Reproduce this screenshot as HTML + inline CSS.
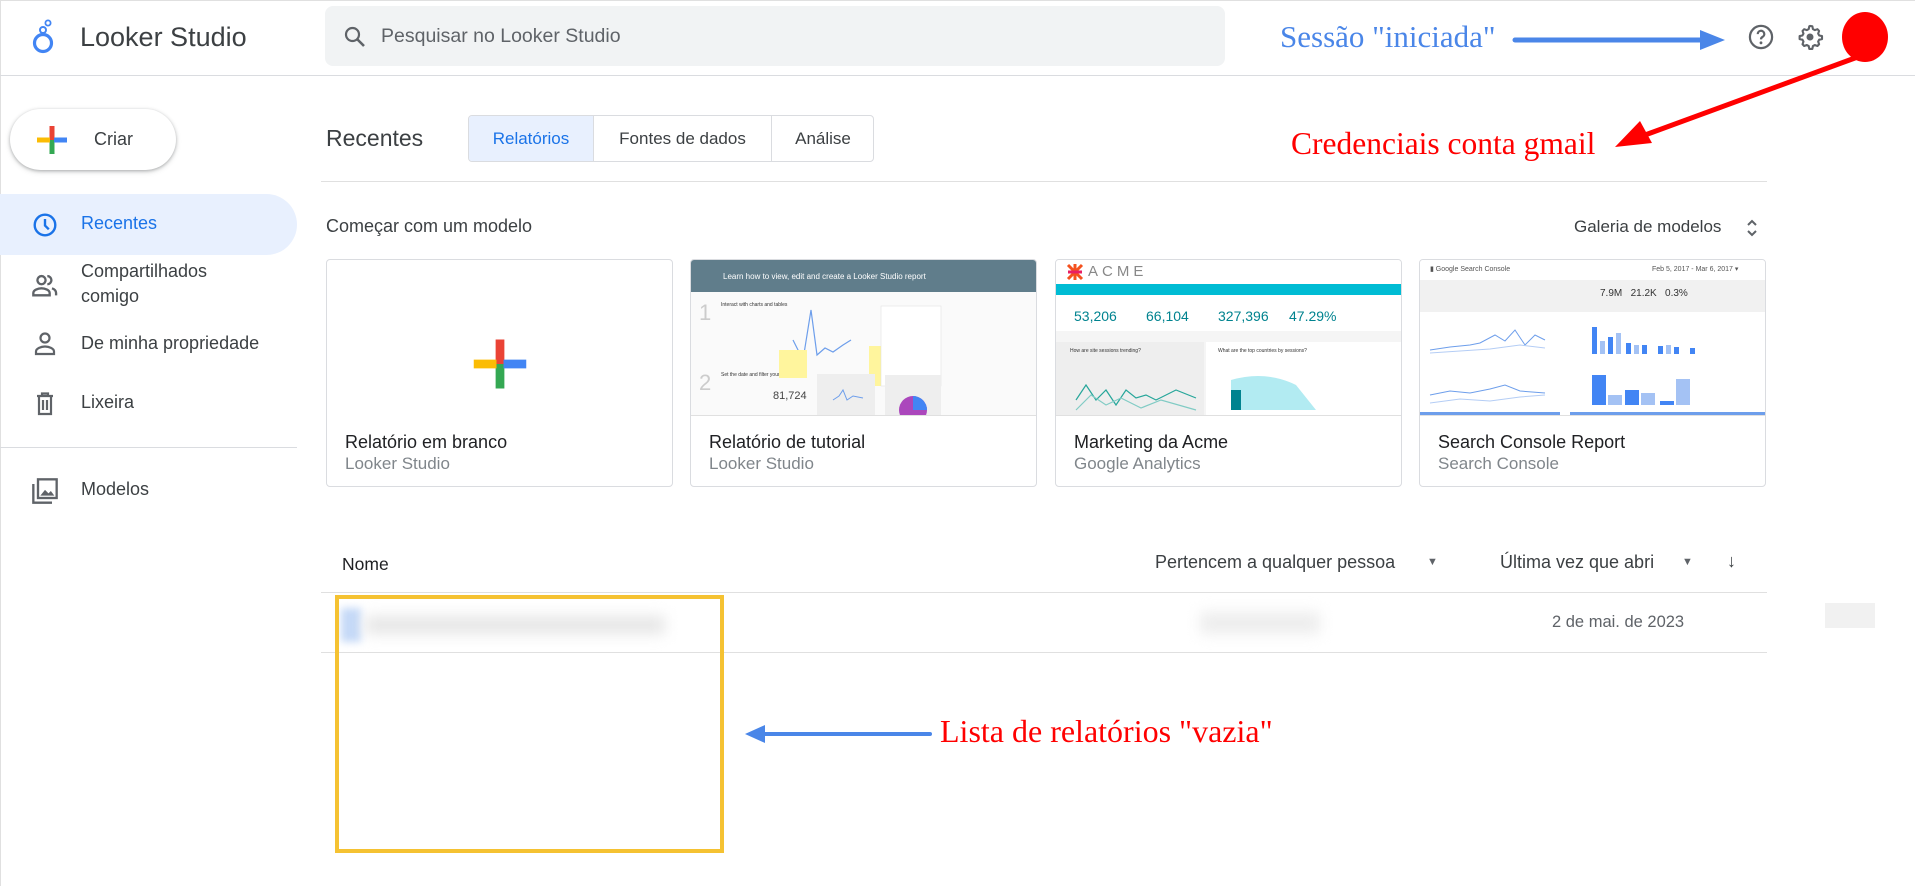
<!DOCTYPE html>
<html><head><meta charset="utf-8"><style>
*{margin:0;padding:0;box-sizing:border-box}
body{width:1915px;height:886px;overflow:hidden;background:#fff;font-family:"Liberation Sans",Arial,sans-serif;color:#3c4043;position:relative}
.a{position:absolute;white-space:nowrap}
.serif{font-family:"Liberation Serif",serif}
.card{position:absolute;top:259px;width:347px;height:228px;border:1px solid #dadce0;border-radius:4px;overflow:hidden;background:#fff}
.thumb{position:absolute;left:0;top:0;width:100%;height:156px;border-bottom:1px solid #e0e0e0;overflow:hidden}
.ct{position:absolute;left:18px;top:172px;font-size:18px;color:#202124}
.cs{position:absolute;left:18px;top:194px;font-size:17px;color:#80868b}
.nav{position:absolute;left:81px;font-size:18px;color:#3c4043}
</style></head><body>
<div class="a" style="left:0;top:0;width:1915px;height:1px;background:#e0e0e0"></div>
<div class="a" style="left:0;top:0;width:1px;height:886px;background:#e0e0e0"></div>
<!-- header -->
<div class="a" style="left:0;top:75px;width:1915px;height:1px;background:#dadce0"></div>
<svg class="a" style="left:30px;top:17px" width="28" height="40" viewBox="0 0 28 40"><circle cx="13" cy="26" r="8.5" fill="none" stroke="#4285f4" stroke-width="3.2"/><circle cx="13" cy="13" r="3" fill="none" stroke="#4285f4" stroke-width="2"/><circle cx="18" cy="6" r="2.6" fill="none" stroke="#4285f4" stroke-width="1.8"/></svg>
<div class="a" style="left:80px;top:22px;font-size:27px;color:#3c4043">Looker Studio</div>
<div class="a" style="left:325px;top:6px;width:900px;height:60px;background:#f1f3f4;border-radius:8px"></div>
<svg class="a" style="left:343px;top:25px" width="24" height="24" viewBox="0 0 24 24"><circle cx="9.5" cy="9.5" r="6.5" fill="none" stroke="#5f6368" stroke-width="2.2"/><path d="M14.5 14.5L21 21" stroke="#5f6368" stroke-width="2.6"/></svg>
<div class="a" style="left:381px;top:25px;font-size:19.5px;color:#5f6368">Pesquisar no Looker Studio</div>
<div class="a serif" style="left:1280px;top:19px;font-size:31px;color:#4a86e8">Sessão "iniciada"</div>
<svg class="a" style="left:1500px;top:25px" width="230" height="30"><path d="M15 15H205" stroke="#4a86e8" stroke-width="5" stroke-linecap="round"/><path d="M200 5L225 15L200 25Z" fill="#4a86e8"/></svg>
<svg class="a" style="left:1747px;top:23px" width="28" height="28" viewBox="0 0 24 24"><circle cx="12" cy="12" r="9.5" fill="none" stroke="#5f6368" stroke-width="1.9"/><path d="M9.2 9.5a2.8 2.8 0 1 1 4 2.5c-.9.5-1.2 1-1.2 2" fill="none" stroke="#5f6368" stroke-width="1.9"/><circle cx="12" cy="17" r="1.2" fill="#5f6368"/></svg>
<svg class="a" style="left:1796px;top:23px" width="28" height="28" viewBox="0 0 24 24"><path d="M12 2.5l2 .3.5 2.4 1.6.9 2.3-.8 1.4 1.5-.8 2.3.9 1.6 2.4.5v2.6l-2.4.5-.9 1.6.8 2.3-1.4 1.5-2.3-.8-1.6.9-.5 2.4h-2.6l-.5-2.4-1.6-.9-2.3.8-1.4-1.5.8-2.3-.9-1.6-2.4-.5v-2.6l2.4-.5.9-1.6-.8-2.3 1.4-1.5 2.3.8 1.6-.9.5-2.4z" fill="none" stroke="#5f6368" stroke-width="1.8" stroke-linejoin="round"/><circle cx="12" cy="12" r="3" fill="#5f6368"/></svg>
<div class="a" style="left:1842px;top:12px;width:46px;height:50px;border-radius:50%;background:#ff0000"></div>
<svg class="a" style="left:1600px;top:55px" width="260" height="100"><path d="M255 3L45 80" stroke="#ff0000" stroke-width="5" stroke-linecap="round"/><path d="M15 92L40 66L52 88Z" fill="#ff0000"/></svg>
<div class="a serif" style="left:1291px;top:126px;font-size:31.5px;color:#ff0000">Credenciais conta gmail</div>
<!-- sidebar -->
<div class="a" style="left:10px;top:109px;width:166px;height:61px;border-radius:31px;background:#fff;box-shadow:0 1px 3px rgba(60,64,67,.35),0 2px 6px rgba(60,64,67,.15)"></div>
<svg class="a" style="left:37px;top:124px" width="30" height="32" viewBox="0 0 30 32"><rect x="12.5" y="2" width="5" height="14" fill="#ea4335"/><rect x="12.5" y="16" width="5" height="14" fill="#34a853"/><rect x="0" y="13.5" width="13" height="5" fill="#fbbc04"/><rect x="17" y="13.5" width="13" height="5" fill="#4285f4"/></svg>
<div class="a" style="left:94px;top:129px;font-size:18px;color:#3c4043">Criar</div>
<div class="a" style="left:0;top:194px;width:297px;height:61px;background:#e8f0fe;border-radius:0 31px 31px 0"></div>
<svg class="a" style="left:32px;top:212px" width="26" height="26" viewBox="0 0 24 24"><circle cx="12" cy="12" r="9.5" fill="none" stroke="#1a73e8" stroke-width="2.2"/><path d="M12 6.5V12.5L15.5 16" fill="none" stroke="#1a73e8" stroke-width="2.2"/></svg>
<div class="nav" style="top:213px;color:#1a73e8">Recentes</div>
<svg class="a" style="left:31px;top:273px" width="28" height="26" viewBox="0 0 24 22"><circle cx="9" cy="6" r="3.5" fill="none" stroke="#5f6368" stroke-width="2"/><path d="M2 19v-2c0-2.5 4-4 7-4s7 1.5 7 4v2z" fill="none" stroke="#5f6368" stroke-width="2"/><path d="M14 2.5a3.5 3.5 0 0 1 0 7M18 13c2 .7 3.5 2 3.5 4v2" fill="none" stroke="#5f6368" stroke-width="2"/></svg>
<div class="nav" style="top:261px">Compartilhados</div>
<div class="nav" style="top:286px">comigo</div>
<svg class="a" style="left:33px;top:331px" width="24" height="26" viewBox="0 0 24 26"><circle cx="12" cy="7" r="4.5" fill="none" stroke="#5f6368" stroke-width="2.2"/><path d="M3 23v-2.5c0-3 5-5 9-5s9 2 9 5V23z" fill="none" stroke="#5f6368" stroke-width="2.2"/></svg>
<div class="nav" style="top:333px">De minha propriedade</div>
<svg class="a" style="left:33px;top:391px" width="24" height="26" viewBox="0 0 24 26"><path d="M4 5h16M9 5V2.5h6V5M6 5v18h12V5M10 9v10M14 9v10" fill="none" stroke="#5f6368" stroke-width="2.2"/></svg>
<div class="nav" style="top:392px">Lixeira</div>
<div class="a" style="left:0;top:447px;width:297px;height:1px;background:#dadce0"></div>
<svg class="a" style="left:31px;top:477px" width="28" height="28" viewBox="0 0 24 24"><rect x="6" y="2" width="16" height="16" fill="none" stroke="#5f6368" stroke-width="2"/><path d="M2 6v16h16" fill="none" stroke="#5f6368" stroke-width="2"/><path d="M8 16l4-5 3 3 2-2 3 4z" fill="#5f6368"/></svg>
<div class="nav" style="top:479px">Modelos</div>
<!-- main -->
<div class="a" style="left:326px;top:125px;font-size:23px;color:#3c4043">Recentes</div>
<div class="a" style="left:468px;top:115px;width:406px;height:47px;border:1px solid #dadce0;border-radius:4px;overflow:hidden">
 <div class="a" style="left:0;top:0;width:125px;height:45px;background:#e8f0fe;border-right:1px solid #dadce0;color:#1a73e8;font-size:17px;text-align:center;line-height:45px">Relatórios</div>
 <div class="a" style="left:125px;top:0;width:178px;height:45px;border-right:1px solid #dadce0;font-size:17px;text-align:center;line-height:45px">Fontes de dados</div>
 <div class="a" style="left:303px;top:0;width:102px;height:45px;font-size:17px;text-align:center;line-height:45px">Análise</div>
</div>
<div class="a" style="left:321px;top:181px;width:1446px;height:1px;background:#e0e0e0"></div>
<div class="a" style="left:326px;top:216px;font-size:18px;color:#3c4043">Começar com um modelo</div>
<div class="a" style="left:1574px;top:217px;font-size:17px;color:#3c4043">Galeria de modelos</div>
<svg class="a" style="left:1746px;top:217px" width="12" height="22" viewBox="0 0 12 22"><path d="M2 8l4-4 4 4M2 14l4 4 4-4" fill="none" stroke="#5f6368" stroke-width="2"/></svg>
<!-- cards -->
<div class="card" style="left:326px"><div class="thumb" style="border:none"></div>
<svg class="a" style="left:146px;top:76px" width="54" height="56" viewBox="0 0 30 32"><rect x="12.5" y="2" width="5" height="14" fill="#ea4335"/><rect x="12.5" y="16" width="5" height="14" fill="#34a853"/><rect x="0" y="13.5" width="13" height="5" fill="#fbbc04"/><rect x="17" y="13.5" width="13" height="5" fill="#4285f4"/></svg>
<div class="ct">Relatório em branco</div><div class="cs">Looker Studio</div></div>

<div class="card" style="left:690px"><div class="thumb" style="background:#fafafa">
 <div class="a" style="left:0;top:0;width:100%;height:32px;background:#607d8b;color:#fff;font-size:8px;padding:12px 0 0 32px">Learn how to view, edit and create a Looker Studio report</div>
 <div class="a" style="left:8px;top:40px;font-size:22px;color:#ccc">1</div>
 <div class="a" style="left:8px;top:110px;font-size:22px;color:#ccc">2</div>
 <div class="a" style="left:30px;top:42px;font-size:5px;color:#333">Interact with charts and tables</div>
 <div class="a" style="left:30px;top:112px;font-size:5px;color:#333">Set the date and filter your data</div>
 <svg class="a" style="left:62px;top:40px" width="230" height="116"><path d="M40 40L50 60 58 10 64 55 72 48 80 52 90 45 98 40" fill="none" stroke="#6d9eeb" stroke-width="1.2"/><rect x="26" y="50" width="28" height="28" fill="#fff59d"/><rect x="116" y="46" width="28" height="40" fill="#fff59d"/><rect x="128" y="6" width="60" height="80" fill="#fff" stroke="#ddd" stroke-width=".5"/><rect x="64" y="74" width="58" height="42" fill="#eee"/><rect x="132" y="75" width="56" height="41" fill="#eee"/><circle cx="160" cy="110" r="14" fill="#ab47bc"/><path d="M160 110V96A14 14 0 0 1 174 110z" fill="#4285f4"/><path d="M80 100L86 96 90 90 94 100 100 96 110 98" fill="none" stroke="#6d9eeb"/></svg>
 <div class="a" style="left:82px;top:130px;font-size:11px;color:#444">81,724</div>
</div><div class="ct">Relatório de tutorial</div><div class="cs">Looker Studio</div></div>

<div class="card" style="left:1055px"><div class="thumb" style="background:#f5f5f5">
 <div class="a" style="left:0;top:0;width:100%;height:24px;background:#fff"></div>
 <svg class="a" style="left:10px;top:3px" width="18" height="18"><path d="M2 2L16 16M16 2L2 16M9 1V17" stroke="#f4511e" stroke-width="3"/><path d="M2 9H16" stroke="#e91e63" stroke-width="3"/></svg>
 <div class="a" style="left:32px;top:3px;font-size:15px;letter-spacing:4px;color:#888">ACME</div>
 <div class="a" style="left:0;top:24px;width:100%;height:11px;background:#00bcd4"></div>
 <div class="a" style="left:0;top:35px;width:100%;height:36px;background:#fff"></div>
 <div class="a" style="left:18px;top:48px;font-size:14px;color:#00838f">53,206</div>
 <div class="a" style="left:90px;top:48px;font-size:14px;color:#00838f">66,104</div>
 <div class="a" style="left:162px;top:48px;font-size:14px;color:#00838f">327,396</div>
 <div class="a" style="left:233px;top:48px;font-size:14px;color:#00838f">47.29%</div>
 <div class="a" style="left:0;top:82px;width:148px;height:74px;background:#eee"></div>
 <div class="a" style="left:150px;top:82px;width:197px;height:74px;background:#fff"></div>
 <div class="a" style="left:14px;top:88px;font-size:5px;color:#333">How are site sessions trending?</div>
 <div class="a" style="left:162px;top:88px;font-size:5px;color:#333">What are the top countries by sessions?</div>
 <svg class="a" style="left:10px;top:110px" width="330" height="46"><path d="M10 30L20 15 30 30 40 20 50 35 60 20 70 28 80 25 90 30 110 20 130 28" fill="none" stroke="#26a69a" stroke-width="1.2"/><path d="M10 40L25 25 40 35 55 28 75 38 95 30 130 40" fill="none" stroke="#80cbc4" stroke-width="1.2"/><path d="M165 10Q200 0 230 15L250 40H165Z" fill="#b2ebf2"/><path d="M165 20h10v20h-10z" fill="#00838f"/></svg>
</div><div class="ct">Marketing da Acme</div><div class="cs">Google Analytics</div></div>

<div class="card" style="left:1419px"><div class="thumb" style="background:#fff">
 <div class="a" style="left:10px;top:5px;font-size:7px;color:#555">▮ Google Search Console</div>
 <div class="a" style="left:232px;top:5px;font-size:7px;color:#555">Feb 5, 2017 - Mar 6, 2017 ▾</div>
 <div class="a" style="left:0;top:20px;width:100%;height:32px;background:#f1f1f1"></div>
 <div class="a" style="left:180px;top:28px;font-size:10px;color:#333">7.9M&nbsp;&nbsp;&nbsp;21.2K&nbsp;&nbsp;&nbsp;0.3%</div>
 <svg class="a" style="left:0;top:55px" width="347" height="101"><path d="M10 35L30 32 50 30 60 28 75 20 85 26 95 15 105 30 115 20 125 25" fill="none" stroke="#6d9eeb"/><path d="M10 38L40 36 70 34 100 30 125 33" fill="none" stroke="#b4cdf5"/><path d="M10 80L30 76 50 78 70 74 85 70 100 76 125 78" fill="none" stroke="#6d9eeb"/><path d="M10 88L40 84 70 86 100 82 125 80" fill="none" stroke="#b4cdf5"/><g fill="#4285f4"><rect x="172" y="12" width="5" height="27"/><rect x="188" y="22" width="5" height="17"/><rect x="206" y="28" width="5" height="11"/><rect x="222" y="30" width="5" height="9"/><rect x="238" y="31" width="5" height="8"/><rect x="254" y="32" width="5" height="7"/><rect x="270" y="33" width="5" height="6"/><rect x="172" y="60" width="14" height="30"/><rect x="205" y="75" width="14" height="15"/><rect x="240" y="86" width="14" height="4"/></g><g fill="#a4c2f4"><rect x="180" y="26" width="5" height="13"/><rect x="196" y="18" width="5" height="21"/><rect x="214" y="30" width="5" height="9"/><rect x="246" y="30" width="5" height="9"/><rect x="188" y="80" width="14" height="10"/><rect x="221" y="78" width="14" height="12"/><rect x="256" y="64" width="14" height="26"/></g><rect x="0" y="97" width="140" height="4" fill="#6d9eeb"/><rect x="150" y="97" width="197" height="4" fill="#6d9eeb"/></svg>
</div><div class="ct">Search Console Report</div><div class="cs">Search Console</div></div>
<!-- table -->
<div class="a" style="left:342px;top:554px;font-size:17.5px;color:#202124">Nome</div>
<div class="a" style="left:1155px;top:552px;font-size:18px;color:#3c4043">Pertencem a qualquer pessoa</div>
<div class="a" style="left:1427px;top:556px;font-size:11px;color:#5f6368">▼</div>
<div class="a" style="left:1500px;top:552px;font-size:18px;color:#3c4043">Última vez que abri</div>
<div class="a" style="left:1682px;top:556px;font-size:11px;color:#5f6368">▼</div>
<div class="a" style="left:1727px;top:551px;font-size:18px;color:#3c4043">↓</div>
<div class="a" style="left:321px;top:592px;width:1446px;height:1px;background:#e0e0e0"></div>
<div class="a" style="left:341px;top:608px;width:20px;height:34px;background:#c5d9f7;filter:blur(4px)"></div>
<div class="a" style="left:365px;top:616px;width:300px;height:18px;background:#e6e6e6;filter:blur(7px)"></div>
<div class="a" style="left:1200px;top:612px;width:120px;height:22px;background:#ededed;filter:blur(7px)"></div>
<div class="a" style="left:1552px;top:613px;font-size:16.5px;color:#5f6368">2 de mai. de 2023</div>
<div class="a" style="left:1825px;top:603px;width:50px;height:25px;background:#f1f1f1"></div>
<div class="a" style="left:321px;top:652px;width:1446px;height:1px;background:#e0e0e0"></div>
<div class="a" style="left:335px;top:595px;width:389px;height:258px;border:4px solid #f5c232"></div>
<svg class="a" style="left:740px;top:722px" width="195" height="24"><path d="M20 12H190" stroke="#4a86e8" stroke-width="4" stroke-linecap="round"/><path d="M5 12L25 3V21Z" fill="#4a86e8"/></svg>
<div class="a serif" style="left:940px;top:713px;font-size:32px;color:#ff0000">Lista de relatórios "vazia"</div>
</body></html>
